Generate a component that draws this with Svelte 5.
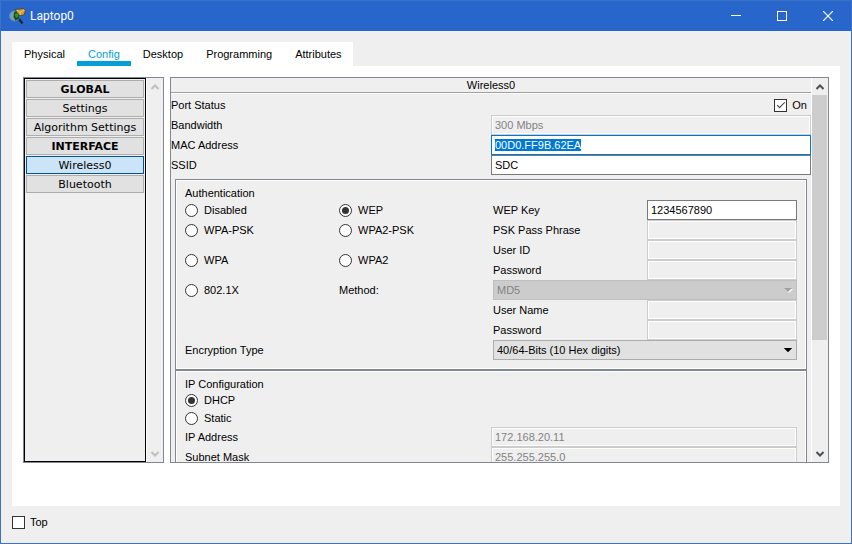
<script lang="ts">
	import { onMount } from 'svelte';

	const tabs = ['Physical', 'Config', 'Desktop', 'Programming', 'Attributes'];
	const sections = [
		{ title: 'GLOBAL', items: ['Settings', 'Algorithm Settings'] },
		{ title: 'INTERFACE', items: ['Wireless0', 'Bluetooth'] }
	];

	let activeTab = $state('Config');
	let activeItem = $state('Wireless0');
	let portOn = $state(true);
	let onTop = $state(false);
	let mac = $state('00D0.FF9B.62EA');
	let ssid = $state('SDC');
	let auth = $state('WEP');
	let wepKey = $state('1234567890');
	let encryption = $state('40/64-Bits (10 Hex digits)');
	let ipMode = $state('DHCP');
	let macInput: HTMLInputElement;

	onMount(() => {
		macInput.focus();
		macInput.select();
	});
</script>

{#snippet radio(value: string)}
	<input type="radio" name="auth" {value} bind:group={auth} />
	{value}
{/snippet}

{#snippet chevron(up: boolean)}
	<svg width="8" height="6" viewBox="0 0 8 6" fill="none" stroke="currentColor" stroke-width="2">
		<path d={up ? 'M0.5 5 4 1.5 7.5 5' : 'M0.5 1 4 4.5 7.5 1'} />
	</svg>
{/snippet}

<div class="window">
	<header class="titlebar">
		<svg class="app-icon" width="17" height="17" viewBox="0 0 17 17">
			<path d="M10 11 13.500 15.500" stroke="#20242b" stroke-width="2.2" />
			<circle cx="5.5" cy="8" r="5" fill="#7d9cba" stroke="#5f88b5" />
			<path d="M5 4.5 8 2.500 11 6 10 10.5 6.500 12.500 4.500 9Z" fill="#164c16" />
			<path d="M5.500 6 8.500 5 9.500 8.500 7 10Z" fill="#249a2b" />
			<path d="M6 1.500 15 0.500 16.500 2.500 15 7 10.500 7.500 8 4.500Z" fill="#c49a43" stroke="#51401f" stroke-width="0.8" />
			<path d="M8 2 11 4.500 15 2M11 4.500 11.500 7" fill="none" stroke="#f0cf7b" />
		</svg>
		<span class="title">Laptop0</span>
		<button class="win-btn" aria-label="Minimize">
			<svg width="10" height="10" viewBox="0 0 10 10"><path d="M0 4.5H10" stroke="#fff" /></svg>
		</button>
		<button class="win-btn" aria-label="Maximize">
			<svg width="10" height="10" viewBox="0 0 10 10">
				<rect x="0.5" y="0.5" width="9" height="9" fill="none" stroke="#fff" />
			</svg>
		</button>
		<button class="win-btn" aria-label="Close">
			<svg width="10" height="10" viewBox="0 0 10 10">
				<path d="M0 0 10 10M10 0 0 10" stroke="#fff" stroke-width="1.2" />
			</svg>
		</button>
	</header>

	<main class="body">
		<nav class="tabs">
			{#each tabs as tab (tab)}
				<button class="tab" class:active={tab === activeTab} onclick={() => (activeTab = tab)}>
					{tab}
				</button>
			{/each}
		</nav>

		<div class="panel">
			<aside class="sidebar">
				<div class="menu">
					{#each sections as section (section.title)}
						<button class="menu-btn heading">{section.title}</button>
						{#each section.items as item (item)}
							<button
								class="menu-btn"
								class:selected={item === activeItem}
								onclick={() => (activeItem = item)}
							>
								{item}
							</button>
						{/each}
					{/each}
				</div>
				<div class="scrollbar idle">
					<button class="arrow" aria-label="Scroll menu up">{@render chevron(true)}</button>
					<div class="track"></div>
					<button class="arrow" aria-label="Scroll menu down">{@render chevron(false)}</button>
				</div>
			</aside>

			<section class="config">
				<div class="scroll">
					<h1>Wireless0</h1>
					<div class="pair">
						<span>Port Status</span>
						<label class="option end">
							<input type="checkbox" bind:checked={portOn} />
							On
						</label>
						<label for="bandwidth">Bandwidth</label>
						<input id="bandwidth" type="text" value="300 Mbps" disabled />
						<label for="mac">MAC Address</label>
						<input id="mac" type="text" bind:value={mac} bind:this={macInput} />
						<label for="ssid">SSID</label>
						<input id="ssid" type="text" bind:value={ssid} />
					</div>

					<div class="groups">
						<fieldset>
							<legend>Authentication</legend>
							<div class="auth">
								<label class="option">{@render radio('Disabled')}</label>
								<label class="option">{@render radio('WEP')}</label>
								<label for="wep-key">WEP Key</label>
								<input id="wep-key" type="text" bind:value={wepKey} />

								<label class="option">{@render radio('WPA-PSK')}</label>
								<label class="option">{@render radio('WPA2-PSK')}</label>
								<label for="psk">PSK Pass Phrase</label>
								<input id="psk" type="text" disabled />

								<label class="option tall">{@render radio('WPA')}</label>
								<label class="option tall">{@render radio('WPA2')}</label>
								<label for="user-id">User ID</label>
								<input id="user-id" type="text" disabled />
								<label for="wpa-password">Password</label>
								<input id="wpa-password" type="password" disabled />

								<label class="option">{@render radio('802.1X')}</label>
								<label for="method">Method:</label>
								<div class="select wide">
									<select id="method" disabled>
										<option>MD5</option>
									</select>
								</div>

								<label class="third" for="user-name">User Name</label>
								<input id="user-name" type="text" disabled />
								<label class="third" for="dot1x-password">Password</label>
								<input id="dot1x-password" type="password" disabled />

								<label class="wide" for="encryption">Encryption Type</label>
								<div class="select wide">
									<select id="encryption" bind:value={encryption}>
										<option>40/64-Bits (10 Hex digits)</option>
									</select>
								</div>
							</div>
						</fieldset>

						<fieldset>
							<legend>IP Configuration</legend>
							<div class="modes">
								{#each ['DHCP', 'Static'] as mode (mode)}
									<label class="option">
										<input type="radio" name="ip-mode" value={mode} bind:group={ipMode} />
										{mode}
									</label>
								{/each}
							</div>
							<div class="pair">
								<label for="ip">IP Address</label>
								<input id="ip" type="text" value="172.168.20.11" disabled={ipMode === 'DHCP'} />
								<label for="mask">Subnet Mask</label>
								<input id="mask" type="text" value="255.255.255.0" disabled={ipMode === 'DHCP'} />
							</div>
						</fieldset>
					</div>
				</div>
				<div class="scrollbar">
					<button class="arrow" aria-label="Scroll up">{@render chevron(true)}</button>
					<div class="track"><div class="thumb"></div></div>
					<button class="arrow" aria-label="Scroll down">{@render chevron(false)}</button>
				</div>
			</section>
		</div>
	</main>

	<footer>
		<label class="option">
			<input type="checkbox" bind:checked={onTop} />
			Top
		</label>
	</footer>
</div>

<style>
	:global(body) {
		margin: 0;
	}
	.window, .window * {
		box-sizing: border-box;
	}
	.window {
		display: flex;
		flex-direction: column;
		height: 100vh;
		border: 1px solid #3a72c8;
		background: #efefef;
		color: #000;
		font-family: 'Liberation Sans', Arial, sans-serif;
		font-size: 11px;
		line-height: 14px;
	}
	button, input, select {
		margin: 0;
		font: inherit;
		color: inherit;
		border-radius: 0;
	}
	button {
		padding: 0;
		border: none;
		background: none;
	}
	svg {
		display: block;
	}
	.titlebar {
		display: flex;
		align-items: center;
		flex: none;
		height: 30px;
		padding-left: 8px;
		background: #2866cb;
		color: #fff;
	}
	.title {
		flex: 1;
		padding-left: 4px;
		font-family: Roboto, 'Segoe UI', sans-serif;
		font-size: 12px;
	}
	.win-btn {
		display: flex;
		align-items: center;
		justify-content: center;
		width: 46px;
		height: 30px;
	}
	.body {
		display: flex;
		flex-direction: column;
		flex: 1;
		min-height: 0;
		padding: 11px 11px 0;
	}
	.tabs {
		display: flex;
		gap: 1px;
		align-self: flex-start;
		padding-left: 1px;
		background: #fff;
	}
	.tab {
		height: 24px;
		padding: 0 11px;
		border-top: 5px solid transparent;
		border-bottom: 5px solid transparent;
	}
	.tab.active {
		color: #049fd9;
		border-bottom-color: #049fd9;
	}
	.panel {
		display: flex;
		gap: 6px;
		flex: 1;
		min-height: 0;
		padding: 11px 11px 43px;
		background: #fff;
	}
	.sidebar {
		display: flex;
		flex: none;
		width: 141px;
		border: 1px solid #828790;
		background: #efefef;
	}
	.menu {
		display: flex;
		flex-direction: column;
		gap: 1px;
		flex: 1;
		border: 1px solid #000;
		padding: 1px;
		font-family: 'DejaVu Sans', Verdana, sans-serif;
	}
	.menu-btn {
		height: 18px;
		padding-top: 2px;
		border: 1px solid #adadad;
		background: #e1e1e1;
		white-space: nowrap;
	}
	.menu-btn.heading {
		font-weight: bold;
	}
	.menu-btn.selected {
		border-color: #005499;
		background: #cce4f7;
	}
	.scrollbar {
		display: flex;
		flex-direction: column;
		flex: none;
		width: 17px;
		border-left: 1px solid #fff;
		color: #505050;
	}
	.scrollbar.idle {
		color: #bfbfbf;
	}
	.arrow {
		display: flex;
		align-items: center;
		justify-content: center;
		height: 17px;
	}
	.track {
		flex: 1;
		padding-right: 1px;
	}
	.thumb {
		height: 70%;
		background: #cdcdcd;
	}
	.config {
		display: flex;
		flex: 1;
		min-width: 0;
		border: 1px solid #828790;
		background: #efefef;
	}
	.scroll {
		flex: 1;
		min-width: 0;
		overflow-y: auto;
		scrollbar-width: none;
	}
	h1 {
		height: 17px;
		margin: 0;
		font-size: 11px;
		font-weight: normal;
		text-align: center;
		background: linear-gradient(#a0a0a0 50%, #fff 50%) 0 14px / 100% 2px no-repeat;
	}
	.pair {
		display: grid;
		grid-template-columns: 1fr 1fr;
		grid-auto-rows: 20px;
		align-items: center;
	}
	.option {
		display: flex;
		align-items: center;
		gap: 6px;
	}
	.option.end {
		justify-content: flex-end;
		gap: 5px;
		padding-right: 4px;
	}
	input[type='text'], input[type='password'] {
		width: 100%;
		height: 20px;
		padding: 2px 3px;
		border: 1px solid #7a7a7a;
		background: #fff;
		outline: none;
	}
	input[type='text']:focus {
		border-color: #0078d7;
	}
	input:disabled {
		border-color: #ccc !important;
		background: #efefef !important;
		box-shadow: inset 0 0 0 1px #fff;
		color: #838383;
	}
	input::selection {
		background: #0078d7;
		color: #fff;
	}
	input[type='radio'], input[type='checkbox'] {
		appearance: none;
		display: grid;
		place-items: center;
		width: 13px;
		height: 13px;
		border: 1px solid #333;
		background: #fff;
	}
	input[type='radio'] {
		border-radius: 50%;
	}
	input[type='radio']:checked::before {
		content: '';
		width: 7px;
		height: 7px;
		border-radius: 50%;
		background: #333;
	}
	input[type='checkbox']:checked::before {
		content: '';
		width: 3px;
		height: 7px;
		margin-bottom: 3px;
		border: solid #333;
		border-width: 0 1px 1px 0;
		transform: rotate(45deg);
	}
	.groups {
		padding: 4px 4px 0;
	}
	fieldset {
		min-width: 0;
		margin: 0;
		padding: 6px 9px 9px;
		border: 1px solid #828790;
		box-shadow: inset 0 0 0 1px #fff;
	}
	legend {
		float: left;
		width: 100%;
		padding: 0;
	}
	.auth {
		clear: both;
		display: grid;
		grid-template-columns: repeat(4, minmax(0, 1fr));
		grid-auto-rows: 20px;
		column-gap: 4px;
		align-items: center;
	}
	.tall {
		grid-row: span 2;
	}
	.third {
		grid-column: 3;
	}
	.wide {
		grid-column: span 2;
	}
	.select {
		position: relative;
	}
	.select::before, .select::after {
		content: '';
		position: absolute;
		top: 8px;
		right: 5px;
		width: 8px;
		height: 4px;
		background: #000;
		clip-path: polygon(0 0, 100% 0, 50% 100%);
		pointer-events: none;
	}
	/* etched arrow on a disabled box */
	.select:has(:disabled)::before {
		top: 9px;
		right: 4px;
		z-index: 1;
		background: #fff;
	}
	.select:has(:disabled)::after {
		z-index: 2;
		background: #a0a0a0;
	}
	select {
		appearance: none;
		display: block;
		width: 100%;
		height: 20px;
		padding: 0 3px;
		border: 1px solid #adadad;
		background: #e1e1e1;
		outline: none;
	}
	select:disabled {
		border-color: #bfbfbf;
		background: #ccc;
		color: #838383;
		opacity: 1;
	}
	.modes {
		clear: both;
		display: grid;
		grid-auto-rows: 18px;
	}
	footer {
		flex: none;
		display: flex;
		padding: 9px 11px 14px;
	}
	footer .option {
		gap: 5px;
	}
</style>
